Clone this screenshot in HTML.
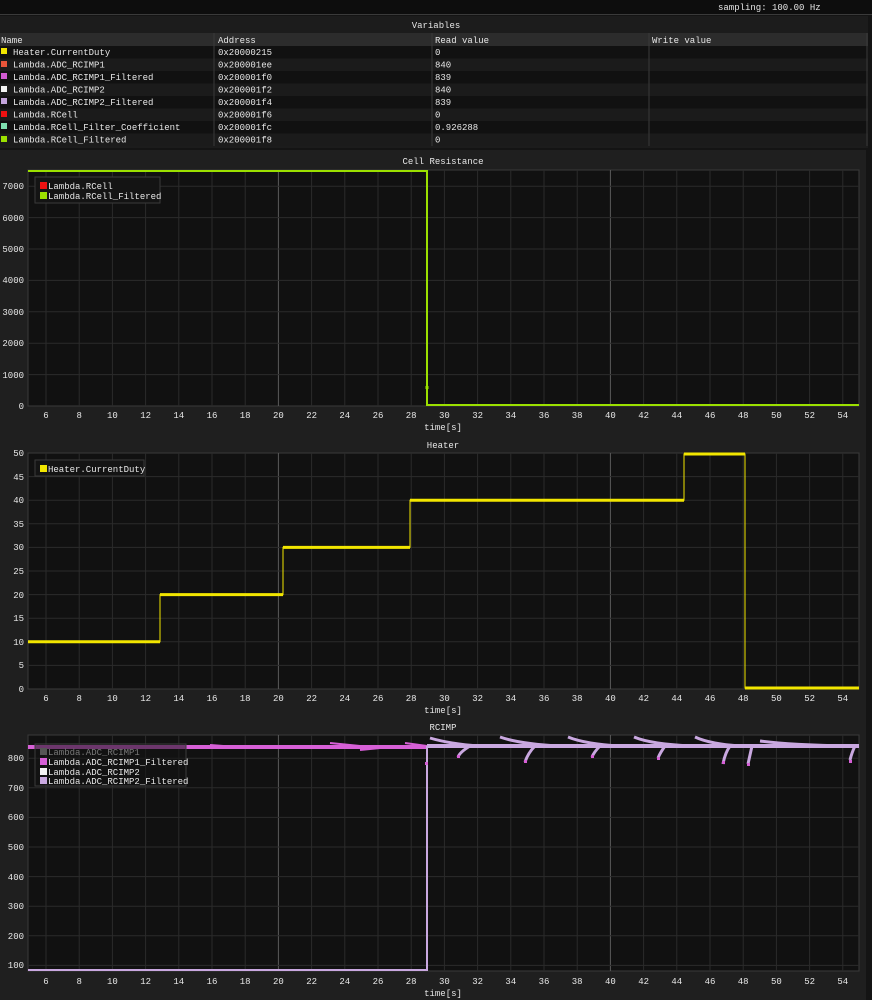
<!DOCTYPE html>
<html><head><meta charset="utf-8"><style>
html,body{margin:0;padding:0;background:#141414;width:872px;height:1000px;overflow:hidden}
svg{display:block}
text{font-family:"Liberation Mono","DejaVu Sans Mono",monospace;font-size:9px;fill:#e6e6e6}
</style></head><body>
<svg width="872" height="1000" viewBox="0 0 872 1000" xmlns="http://www.w3.org/2000/svg">
<defs>
<g id="xl">
<text x="46" y="0" text-anchor="middle">6</text><text x="79.2" y="0" text-anchor="middle">8</text><text x="112.4" y="0" text-anchor="middle">10</text><text x="145.6" y="0" text-anchor="middle">12</text><text x="178.8" y="0" text-anchor="middle">14</text><text x="212" y="0" text-anchor="middle">16</text><text x="245.2" y="0" text-anchor="middle">18</text><text x="278.4" y="0" text-anchor="middle">20</text><text x="311.6" y="0" text-anchor="middle">22</text><text x="344.8" y="0" text-anchor="middle">24</text><text x="378" y="0" text-anchor="middle">26</text><text x="411.2" y="0" text-anchor="middle">28</text><text x="444.4" y="0" text-anchor="middle">30</text><text x="477.6" y="0" text-anchor="middle">32</text><text x="510.8" y="0" text-anchor="middle">34</text><text x="544" y="0" text-anchor="middle">36</text><text x="577.2" y="0" text-anchor="middle">38</text><text x="610.4" y="0" text-anchor="middle">40</text><text x="643.6" y="0" text-anchor="middle">42</text><text x="676.8" y="0" text-anchor="middle">44</text><text x="710" y="0" text-anchor="middle">46</text><text x="743.2" y="0" text-anchor="middle">48</text><text x="776.4" y="0" text-anchor="middle">50</text><text x="809.6" y="0" text-anchor="middle">52</text><text x="842.8" y="0" text-anchor="middle">54</text>
<text x="443" y="12" text-anchor="middle">time[s]</text>
</g>
<g id="vg" stroke="#2b2b2b" stroke-width="1">
<path d="M46 0V236M79.2 0V236M112.4 0V236M145.6 0V236M178.8 0V236M212 0V236M245.2 0V236M311.6 0V236M344.8 0V236M378 0V236M411.2 0V236M444.4 0V236M477.6 0V236M510.8 0V236M544 0V236M577.2 0V236M643.6 0V236M676.8 0V236M710 0V236M743.2 0V236M776.4 0V236M809.6 0V236M842.8 0V236"/>
<path d="M278.4 0V236M610.4 0V236" stroke="#5a5a5a"/>
</g>
</defs>
<rect x="0" y="0" width="872" height="14" fill="#0d0d0d"/>
<rect x="0" y="14" width="872" height="1" fill="#3a3a3a"/>
<text x="718" y="10">sampling:  100.00 Hz</text>
<rect x="0" y="16" width="868" height="132" fill="#1c1c1c"/>
<text x="436" y="28" text-anchor="middle">Variables</text>
<rect x="0" y="33" width="868" height="13" fill="#2c2c2c"/>
<rect x="0" y="46" width="868" height="12.5" fill="#111"/>
<rect x="0" y="58.5" width="868" height="12.5" fill="#1b1b1b"/>
<rect x="0" y="71" width="868" height="12.5" fill="#111"/>
<rect x="0" y="83.5" width="868" height="12.5" fill="#1b1b1b"/>
<rect x="0" y="96" width="868" height="12.5" fill="#111"/>
<rect x="0" y="108.5" width="868" height="12.5" fill="#1b1b1b"/>
<rect x="0" y="121" width="868" height="12.5" fill="#111"/>
<rect x="0" y="133.5" width="868" height="12.5" fill="#1b1b1b"/>
<path d="M214 33V146M432 33V146M649 33V146M867 33V146" stroke="#3a3a3a"/>
<text x="1" y="43">Name</text><text x="218" y="43">Address</text><text x="435" y="43">Read value</text><text x="652" y="43">Write value</text>
<rect x="1" y="48" width="6" height="6" fill="#f2e600"/><rect x="1" y="61" width="6" height="6" fill="#e8553a"/><rect x="1" y="73" width="6" height="6" fill="#d25ad2"/><rect x="1" y="86" width="6" height="6" fill="#f4f4f4"/><rect x="1" y="98" width="6" height="6" fill="#c4a4dc"/><rect x="1" y="111" width="6" height="6" fill="#ee1111"/><rect x="1" y="123" width="6" height="6" fill="#7fe0b0"/><rect x="1" y="136" width="6" height="6" fill="#9be000"/>
<text x="13" y="55">Heater.CurrentDuty</text><text x="218" y="55">0x20000215</text><text x="435" y="55">0</text>
<text x="13" y="67.5">Lambda.ADC_RCIMP1</text><text x="218" y="67.5">0x200001ee</text><text x="435" y="67.5">840</text>
<text x="13" y="80">Lambda.ADC_RCIMP1_Filtered</text><text x="218" y="80">0x200001f0</text><text x="435" y="80">839</text>
<text x="13" y="92.5">Lambda.ADC_RCIMP2</text><text x="218" y="92.5">0x200001f2</text><text x="435" y="92.5">840</text>
<text x="13" y="105">Lambda.ADC_RCIMP2_Filtered</text><text x="218" y="105">0x200001f4</text><text x="435" y="105">839</text>
<text x="13" y="117.5">Lambda.RCell</text><text x="218" y="117.5">0x200001f6</text><text x="435" y="117.5">0</text>
<text x="13" y="130">Lambda.RCell_Filter_Coefficient</text><text x="218" y="130">0x200001fc</text><text x="435" y="130">0.926288</text>
<text x="13" y="142.5">Lambda.RCell_Filtered</text><text x="218" y="142.5">0x200001f8</text><text x="435" y="142.5">0</text>
<rect x="0" y="150" width="866" height="850" fill="#1f1f1f"/>
<text x="443" y="164" text-anchor="middle">Cell Resistance</text>
<rect x="28" y="170" width="831" height="236" fill="#111" stroke="#3a3a3a"/>
<g transform="translate(0,170)"><use href="#vg"/></g>
<path d="M28 374.6H859M28 343.2H859M28 311.8H859M28 280.4H859M28 249H859M28 217.6H859M28 186.2H859" stroke="#2b2b2b"/>
<g text-anchor="end"><text x="24" y="409">0</text><text x="24" y="378">1000</text><text x="24" y="346">2000</text><text x="24" y="315">3000</text><text x="24" y="283">4000</text><text x="24" y="252">5000</text><text x="24" y="221">6000</text><text x="24" y="189">7000</text></g>
<path d="M28 171H427V405H859" fill="none" stroke="#9be000" stroke-width="2"/>
<rect x="425.5" y="386" width="3" height="3" fill="#9be000"/>
<rect x="35" y="177" width="125" height="26" fill="#141414" stroke="#3a3a3a"/>
<rect x="40" y="182" width="7" height="7" fill="#ee1111"/><text x="48" y="189">Lambda.RCell</text>
<rect x="40" y="192" width="7" height="7" fill="#9be000"/><text x="48" y="199">Lambda.RCell_Filtered</text>
<g transform="translate(0,418)"><use href="#xl"/></g>
<text x="443" y="448" text-anchor="middle">Heater</text>
<rect x="28" y="453" width="831" height="236" fill="#111" stroke="#3a3a3a"/>
<g transform="translate(0,453)"><use href="#vg"/></g>
<path d="M28 665.4H859M28 641.8H859M28 618.2H859M28 594.6H859M28 571H859M28 547.4H859M28 523.8H859M28 500.2H859M28 476.6H859" stroke="#2b2b2b"/>
<g text-anchor="end"><text x="24" y="692">0</text><text x="24" y="668">5</text><text x="24" y="645">10</text><text x="24" y="621">15</text><text x="24" y="598">20</text><text x="24" y="574">25</text><text x="24" y="550">30</text><text x="24" y="527">35</text><text x="24" y="503">40</text><text x="24" y="480">45</text><text x="24" y="456">50</text></g>
<path d="M28 641.8H160V594.6H283V547.4H410V500.2H684V454H745V688H859" fill="none" stroke="#f2e600" stroke-width="1"/>
<path d="M28 641.8H160M160 594.6H283M283 547.4H410M410 500.2H684M684 454H745M745 688H859" fill="none" stroke="#f2e600" stroke-width="3"/>
<rect x="35" y="460" width="109" height="16" fill="#141414" stroke="#3a3a3a"/>
<rect x="40" y="465" width="7" height="7" fill="#f2e600"/><text x="48" y="472">Heater.CurrentDuty</text>
<g transform="translate(0,701)"><use href="#xl"/></g>
<text x="443" y="730" text-anchor="middle">RCIMP</text>
<rect x="28" y="735" width="831" height="236" fill="#111" stroke="#3a3a3a"/>
<g transform="translate(0,735)"><use href="#vg"/></g>
<path d="M28 965.4H859M28 935.8H859M28 906.2H859M28 876.6H859M28 847H859M28 817.4H859M28 787.8H859M28 758.2H859" stroke="#2b2b2b"/>
<g text-anchor="end"><text x="24" y="968">100</text><text x="24" y="939">200</text><text x="24" y="909">300</text><text x="24" y="880">400</text><text x="24" y="850">500</text><text x="24" y="820">600</text><text x="24" y="791">700</text><text x="24" y="761">800</text></g>
<path d="M28 747H427" stroke="#d760d7" stroke-width="4"/>
<path d="M210 745L250 748M330 743L380 748L360 750M405 743L427 746" stroke="#d760d7" stroke-width="2" fill="none"/>
<path d="M28 970H427V746" stroke="#c9a8e0" stroke-width="2" fill="none"/>
<path d="M427 746H859" stroke="#c9a8e0" stroke-width="4"/>
<g fill="none" stroke="#c9a8e0" stroke-width="3">
<path d="M430 738Q450 744 480 746M500 737Q520 744 560 746M568 737Q585 744 620 746M634 737Q650 744 690 746M695 737Q710 744 740 746M760 741Q790 745 850 746"/>
<path d="M470 746Q460 752 458 757M535 746Q528 753 525 762M600 746Q594 752 592 757M665 746Q660 753 658 758M730 746Q725 753 723 764M752 746Q750 755 748 764M855 746Q852 752 850 760"/>
</g>
<g fill="#d760d7"><rect x="457" y="755" width="3" height="3"/><rect x="524" y="760" width="3" height="3"/><rect x="591" y="755" width="3" height="3"/><rect x="657" y="757" width="3" height="3"/><rect x="722" y="761" width="3" height="3"/><rect x="747" y="763" width="3" height="3"/><rect x="849" y="760" width="3" height="3"/><rect x="425" y="762" width="3" height="3"/></g>
<rect x="35" y="744" width="151" height="42" fill="#141414" fill-opacity="0.55" stroke="#3a3a3a"/>
<rect x="40" y="748" width="7" height="7" fill="#555"/><text x="48" y="755" style="fill:#777">Lambda.ADC_RCIMP1</text>
<rect x="40" y="758" width="7" height="7" fill="#d760d7"/><text x="48" y="765">Lambda.ADC_RCIMP1_Filtered</text>
<rect x="40" y="768" width="7" height="7" fill="#f4f4f4"/><text x="48" y="775">Lambda.ADC_RCIMP2</text>
<rect x="40" y="777" width="7" height="7" fill="#c9a8e0"/><text x="48" y="784">Lambda.ADC_RCIMP2_Filtered</text>
<g transform="translate(0,984)"><use href="#xl"/></g>
</svg>
</body></html>
